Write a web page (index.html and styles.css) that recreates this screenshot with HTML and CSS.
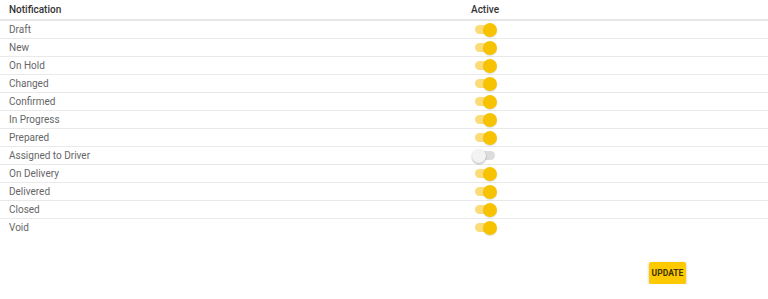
FILE: index.html
```html
<!DOCTYPE html>
<html lang="en">
<head>
  <meta charset="UTF-8" />
  <title>Notifications</title>
  <link rel="stylesheet" href="styles.css">
</head>
<body>

<div class="settings">
  <div class="table">
    <div class="row head">
      <div class="cell name">Notification</div>
      <div class="cell active">Active</div>
    </div>
    <div class="row"><div class="cell name">Draft</div><div class="cell active"><span class="toggle on"></span></div></div>
    <div class="row"><div class="cell name">New</div><div class="cell active"><span class="toggle on"></span></div></div>
    <div class="row"><div class="cell name">On Hold</div><div class="cell active"><span class="toggle on"></span></div></div>
    <div class="row"><div class="cell name">Changed</div><div class="cell active"><span class="toggle on"></span></div></div>
    <div class="row"><div class="cell name">Confirmed</div><div class="cell active"><span class="toggle on"></span></div></div>
    <div class="row"><div class="cell name">In Progress</div><div class="cell active"><span class="toggle on"></span></div></div>
    <div class="row"><div class="cell name">Prepared</div><div class="cell active"><span class="toggle on"></span></div></div>
    <div class="row"><div class="cell name">Assigned to Driver</div><div class="cell active"><span class="toggle"></span></div></div>
    <div class="row"><div class="cell name">On Delivery</div><div class="cell active"><span class="toggle on"></span></div></div>
    <div class="row"><div class="cell name">Delivered</div><div class="cell active"><span class="toggle on"></span></div></div>
    <div class="row"><div class="cell name">Closed</div><div class="cell active"><span class="toggle on"></span></div></div>
    <div class="row last"><div class="cell name">Void</div><div class="cell active"><span class="toggle on"></span></div></div>
  </div>

  <div class="actions">
    <button class="update">UPDATE</button>
  </div>
</div>

</body>
</html>
```

FILE: styles.css
```css
html, body {
  margin: 0;
  padding: 0;
  font-family: Roboto, 'Liberation Sans', sans-serif;
  background: #fff;
  color: #666;
}

.table {
  display: flex;
  flex-direction: column;
}

.row {
  display: grid;
  grid-template-columns: 202px 1fr;
  align-items: center;
  height: 17px;
  border-bottom: 1px solid #e9e9e9;
  font-size: 10px;
}

.row.head {
  height: 19px;
  border-bottom: 2px solid #e6e6e6;
  color: #333;
  font-weight: 500;
}

.row.last {
  border-bottom: none;
}

.cell.name {
  padding-left: 9px;
}

.cell.active {
  display: flex;
  justify-content: center;
}

.toggle {
  position: relative;
  display: block;
  width: 20px;
  height: 9px;
  border-radius: 5px;
  background: #dcdcdc;
}

.toggle::after {
  content: "";
  position: absolute;
  top: -2.5px;
  left: -3px;
  width: 14px;
  height: 14px;
  border-radius: 50%;
  background: #f3f3f3;
  box-shadow: 0 1px 2px rgba(0,0,0,0.3);
}

.toggle.on {
  background: #fbdc78;
}

.toggle.on::after {
  left: 8px;
  background: #f7c300;
  box-shadow: 0 1px 1px rgba(0,0,0,0.12);
}

.actions {
  display: flex;
  justify-content: flex-end;
  padding: 26px 82px 0 0;
}

.update {
  width: 37px;
  height: 22px;
  padding: 0;
  border: none;
  border-radius: 2px;
  background: #fdc900;
  color: #3d3300;
  font-family: Roboto, 'Liberation Sans', sans-serif;
  font-size: 8.5px;
  font-weight: 700;
  box-shadow: 0 1px 3px rgba(0,0,0,0.25);
  cursor: pointer;
}
```
